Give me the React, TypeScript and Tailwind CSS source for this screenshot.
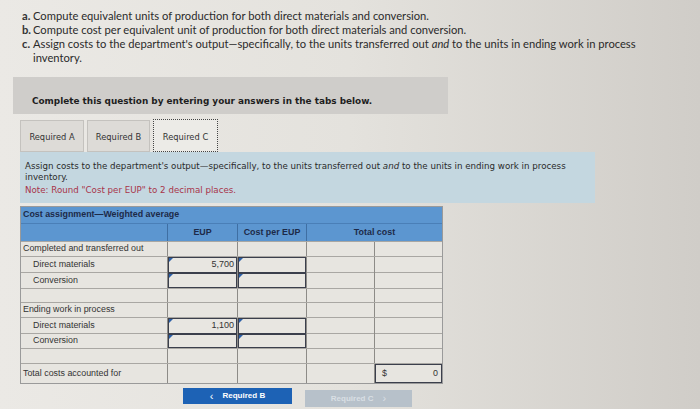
import React from 'react';

interface Row {
  label: string;
  indent?: boolean;
  input?: boolean;
  eup?: string;
  total?: boolean;
  h: string;
}

const ROWS: Row[] = [
  { label: 'Completed and transferred out', h: 'h-[15px]' },
  { label: 'Direct materials', indent: true, input: true, eup: '5,700', h: 'h-[16px]' },
  { label: 'Conversion', indent: true, input: true, h: 'h-[16px]' },
  { label: '', h: 'h-[14px]' },
  { label: 'Ending work in process', h: 'h-[15px]' },
  { label: 'Direct materials', indent: true, input: true, eup: '1,100', h: 'h-[16px]' },
  { label: 'Conversion', indent: true, input: true, h: 'h-[15px]' },
  { label: '', h: 'h-[15px]' },
  { label: 'Total costs accounted for', total: true, h: 'h-[20px]' },
];

const arial = { fontFamily: '"Liberation Sans", Arial, sans-serif' };

function Corner() {
  return <span className="absolute left-0 top-0 w-0 h-0 border-t-[4px] border-r-[4px] border-t-[#2b5fa8] border-r-transparent" />;
}

function InputCell({ value }: { value?: string }) {
  return (
    <div className="relative h-full border border-[#3b3f4c] bg-[#e8e6e1] flex items-center justify-end pr-[2px] text-[9px] text-[#333]">
      <Corner />
      {value}
    </div>
  );
}

export default function App() {
  return (
    <div className="w-[700px] h-[409px] overflow-hidden bg-gradient-to-r from-[#ebe9e5] via-[#e4e2dd] to-[#d0cdc8] text-[#2a2a2a]">
      {/* instructions */}
      <div className="pt-[9px] pl-[22px] text-[11.2px] leading-[14px] text-[#2b2b2b] font-['Lato',sans-serif]">
        <div className="flex"><span className="w-[11px] shrink-0 font-bold text-[#333]">a.</span><span>Compute equivalent units of production for both direct materials and conversion.</span></div>
        <div className="flex"><span className="w-[11px] shrink-0 font-bold text-[#333]">b.</span><span>Compute cost per equivalent unit of production for both direct materials and conversion.</span></div>
        <div className="flex">
          <span className="w-[11px] shrink-0 font-bold text-[#333]">c.</span>
          <p className="w-[615px]">
            Assign costs to the department's output—specifically, to the units transferred out <i>and</i> to the units in ending work in process inventory.
          </p>
        </div>
      </div>

      {/* gray banner */}
      <div className="mt-[12px] ml-[13px] w-[435px] h-[37px] bg-[#cfcdca] flex items-end pb-[6px] pl-[19px]">
        <span className="text-[8.9px] font-bold text-[#1e1e1e] font-['DejaVu_Sans',sans-serif]">
          Complete this question by entering your answers in the tabs below.
        </span>
      </div>

      {/* tabs */}
      <div className="mt-[5px] ml-[20px] flex gap-[3px] items-end text-[8.3px] text-[#333] font-['DejaVu_Sans',sans-serif]">
        <div className="w-[64px] h-[32px] bg-[#dddbd7] border border-[#c4c2be] flex items-center justify-center pt-[3px]">Required A</div>
        <div className="w-[63px] h-[32px] bg-[#dddbd7] border border-[#c4c2be] flex items-center justify-center pt-[3px]">Required B</div>
        <div className="w-[65px] h-[33px] bg-[#ecebe7] border border-dotted border-[#444] flex items-center justify-center pt-[3px]">Required C</div>
      </div>

      {/* blue instruction panel */}
      <div className="ml-[20px] w-[575px] h-[51px] bg-[#c4d7e0] pl-[5px] pt-[9px] text-[8.7px] leading-[10.5px] text-[#2a2a2a] font-['DejaVu_Sans',sans-serif]">
        <div className="w-[560px]">
          Assign costs to the department's output—specifically, to the units transferred out <i>and</i> to the units in ending work in process inventory.
        </div>
        <div className="mt-[3px] text-[#a8344a]">Note: Round "Cost per EUP" to 2 decimal places.</div>
      </div>

      {/* table */}
      <div className="ml-[20px] mt-[3px] w-[423px] border border-[#9a9a9a] text-[8.9px] text-[#333]" style={arial}>
        <div className="h-[16px] bg-[#5c96d0] flex items-center pl-[2px] font-bold text-[#1d2a48]">
          Cost assignment—Weighted average
        </div>
        <div className="h-[18px] bg-[#5c96d0] border-t border-[#4a7fb7] grid grid-cols-[146px_70px_69px_136px] font-bold text-[#1d2a48]">
          <div />
          <div className="border-l border-[#3f6fa3] flex items-center justify-center">EUP</div>
          <div className="border-l border-[#3f6fa3] flex items-center justify-center">Cost per EUP</div>
          <div className="border-l border-[#3f6fa3] flex items-center justify-center">Total cost</div>
        </div>
        {ROWS.map((r, i) => (
          <div key={i} className={`${r.h} grid grid-cols-[146px_70px_69px_68px_68px] border-t border-[#a9a7a3] bg-[#e7e5e0]`}>
            <div className={`flex items-center ${r.indent ? 'pl-[12px]' : 'pl-[2px]'}`}>{r.label}</div>
            <div className="border-l border-[#8d8b87]">{r.input ? <InputCell value={r.eup} /> : null}</div>
            <div className="border-l border-[#8d8b87]">{r.input ? <InputCell /> : null}</div>
            <div className="border-l border-[#8d8b87]" />
            <div className="border-l border-[#8d8b87]">
              {r.total ? (
                <div className="h-full border border-[#3b3f4c] flex items-center justify-between pl-[6px] pr-[3px]">
                  <span>$</span>
                  <span>0</span>
                </div>
              ) : null}
            </div>
          </div>
        ))}
      </div>

      {/* nav buttons */}
      <div className="mt-[4px] flex items-start text-[8px] font-bold" style={arial}>
        <div className="ml-[183px] w-[109px] h-[16px] bg-[#1d62b5] text-white flex items-center justify-center gap-[9px]">
          <span className="text-[11px] font-normal">&lsaquo;</span>
          <span>Required B</span>
        </div>
        <div className="ml-[13px] mt-[2px] w-[107px] h-[17px] bg-[#b7c1ca] text-[#d9dfe4] flex items-center justify-center gap-[9px]">
          <span>Required C</span>
          <span className="text-[11px] font-normal">&rsaquo;</span>
        </div>
      </div>
    </div>
  );
}
